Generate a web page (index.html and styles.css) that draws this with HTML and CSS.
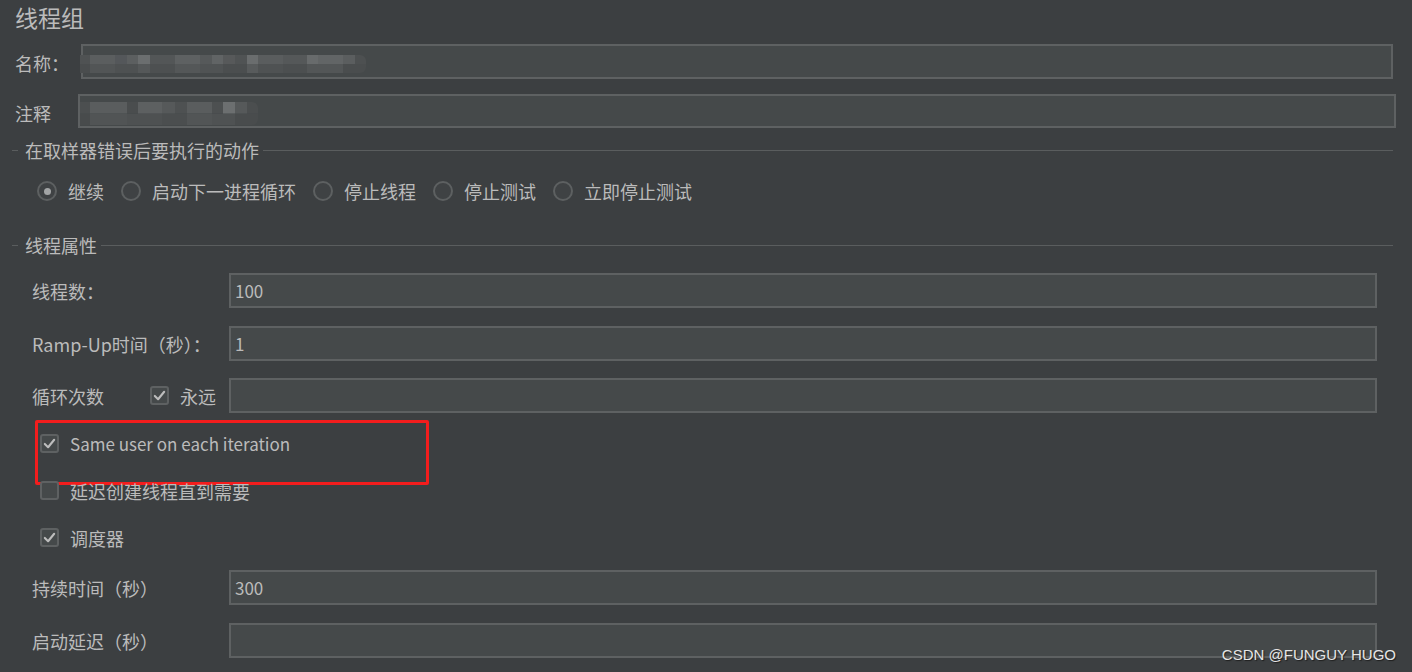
FILE: index.html
```html
<!DOCTYPE html>
<html lang="zh-CN">
<head>
    <meta charset="utf-8">
    <title>线程组</title>
    <link rel="stylesheet" href="styles.css">
</head>
<body>

<div class="panel">
    <h1 class="panel-title">线程组</h1>

    <!-- Name / comment -->
    <div class="name-row">
        <span class="name-label">名称：</span>
        <div class="text-field"><span class="mosaic mosaic-name"></span></div>
    </div>
    <div class="note-row">
        <span class="note-label">注释</span>
        <div class="text-field"><span class="mosaic mosaic-note"></span></div>
    </div>

    <!-- Action after sampler error -->
    <div class="group-title errors-title"><span>在取样器错误后要执行的动作</span></div>
    <div class="radio-row">
        <label class="radio"><span class="radio-dot checked"></span>继续</label>
        <label class="radio"><span class="radio-dot"></span>启动下一进程循环</label>
        <label class="radio"><span class="radio-dot"></span>停止线程</label>
        <label class="radio"><span class="radio-dot"></span>停止测试</label>
        <label class="radio"><span class="radio-dot"></span>立即停止测试</label>
    </div>

    <!-- Thread properties -->
    <div class="group-title props-title"><span>线程属性</span></div>

    <div class="form-row first-row">
        <span class="form-label">线程数：</span>
        <div class="text-field">100</div>
    </div>
    <div class="form-row">
        <span class="form-label">Ramp-Up时间（秒）：</span>
        <div class="text-field">1</div>
    </div>
    <div class="form-row loop-row">
        <span class="form-label">
            循环次数
            <span class="check forever-check"><svg viewBox="0 0 16 16"><polyline points="3,8.5 6.5,12 13,4"/></svg></span>
            <span class="forever-text">永远</span>
        </span>
        <div class="text-field"></div>
    </div>

    <div class="check-row marked">
        <span class="check"><svg viewBox="0 0 16 16"><polyline points="3,8.5 6.5,12 13,4"/></svg></span>
        <span class="check-text">Same user on each iteration</span>
    </div>
    <div class="check-row">
        <span class="check"></span>
        <span>延迟创建线程直到需要</span>
    </div>
    <div class="check-row">
        <span class="check"><svg viewBox="0 0 16 16"><polyline points="3,8.5 6.5,12 13,4"/></svg></span>
        <span>调度器</span>
    </div>

    <div class="form-row duration-row">
        <span class="form-label">持续时间（秒）</span>
        <div class="text-field">300</div>
    </div>
    <div class="form-row">
        <span class="form-label">启动延迟（秒）</span>
        <div class="text-field"></div>
    </div>

    <div class="watermark">CSDN @FUNGUY HUGO</div>
</div>

</body>
</html>
```

FILE: styles.css
```css
/* Darcula-like thread group panel */
* {
    box-sizing: border-box;
}

body {
    margin: 0;
    background: #3c3f41;
    color: #bbbbbb;
    font-family: "Noto Sans CJK SC", "Noto Sans", sans-serif;
    font-size: 18px;
}

.panel {
    position: relative;
    width: 1412px;
    height: 672px;
    overflow: hidden;
}

.panel-title {
    margin: 0;
    padding-left: 15px;
    height: 34px;
    line-height: 34px;
    font-size: 23px;
    font-weight: normal;
}

/* Text fields */
.text-field {
    flex: 1;
    display: flex;
    align-items: center;
    height: 35px;
    padding-left: 4px;
    background: #45494a;
    border: 2px solid #5e6162;
    font-size: 17px;
    color: #bbbbbb;
}

.name-row,
.note-row {
    display: flex;
    align-items: center;
    padding-left: 15px;
}

.name-row {
    margin-top: 10px;
    padding-right: 19px;
}

.name-label {
    width: 66px;
    padding-top: 3px;
}

.note-row {
    margin-top: 15px;
    padding-right: 16px;
}

.note-row .text-field {
    height: 34px;
}

.note-label {
    width: 63px;
    padding-top: 3px;
}

/* Pixelated (hidden) field contents */
.mosaic {
    align-self: flex-start;
    border-radius: 0 6px 6px 0;
}

.mosaic-name {
    width: 286px;
    height: 18px;
    margin: 9px 0 0 -7px;
    background:
        linear-gradient(to right,
            #4f5253 0 10px, #5b5e5f 10px 35px, #54575a 35px 47px, #5c5f60 47px 58px,
            #6b6e6f 58px 70px, #535657 70px 95px, #5e6162 95px 120px, #56595a 120px 132px,
            #616465 132px 143px, #57595a 143px 155px, #505354 155px 167px, #6a6d6e 167px 178px,
            #5a5d5e 178px 203px, #555859 203px 227px, #686b6c 227px 238px, #626566 238px 263px,
            #5b5e5f 263px 275px, #4d5051 275px 286px) top / 100% 50% no-repeat,
        linear-gradient(to right,
            #4a4d4e 0 10px, #525556 10px 35px, #4e5152 35px 58px, #555859 58px 70px,
            #4d5051 70px 95px, #545758 95px 120px, #505354 120px 143px, #4b4e4f 143px 167px,
            #585b5c 167px 178px, #4f5253 178px 203px, #4c4f50 203px 227px, #535657 227px 263px,
            #4a4d4e 263px 286px) bottom / 100% 50% no-repeat;
}

.mosaic-note {
    width: 178px;
    height: 23px;
    margin: 6px 0 0 -4px;
    background:
        linear-gradient(to right,
            #4c4f50 0 10px, #5a5d5e 10px 47px, #4a4d4e 47px 58px, #5d6061 58px 82px,
            #56595a 82px 95px, #4e5152 95px 107px, #5a5d5e 107px 132px, #4d5051 132px 143px,
            #6c6f70 143px 155px, #56595a 155px 167px, #4b4e4f 167px 178px) top / 100% 50% no-repeat,
        linear-gradient(to right,
            #484b4c 0 10px, #515455 10px 47px, #4e5152 47px 82px, #4b4e4f 82px 107px,
            #525556 107px 132px, #4f5253 132px 155px, #494c4d 155px 178px) bottom / 100% 50% no-repeat;
}

/* Titled group separators */
.group-title {
    display: flex;
    align-items: center;
    height: 22px;
    padding: 0 19px 0 12px;
}

.group-title::before {
    content: "";
    width: 6px;
    margin-right: 7px;
    border-top: 1px solid #5a5d5e;
}

.group-title::after {
    content: "";
    flex: 1;
    margin-left: 4px;
    border-top: 1px solid #5a5d5e;
}

.errors-title {
    margin-top: 11px;
}

.props-title {
    margin-top: 32px;
}

/* Radio buttons */
.radio-row {
    display: flex;
    align-items: center;
    gap: 17px;
    height: 22px;
    margin-top: 19px;
    padding-left: 37px;
}

.radio {
    display: flex;
    align-items: center;
    gap: 11px;
}

.radio-dot {
    display: flex;
    align-items: center;
    justify-content: center;
    width: 20px;
    height: 20px;
    border-radius: 50%;
    border: 2px solid #5d6061;
    background: #3f4244;
}

.radio-dot.checked::after {
    content: "";
    width: 7px;
    height: 7px;
    border-radius: 50%;
    background: #a3a5a6;
}

/* Label + field rows */
.form-row {
    display: flex;
    align-items: center;
    margin-top: 18px;
    padding: 0 35px 0 32px;
}

.form-row.first-row {
    margin-top: 17px;
}

.form-row.loop-row {
    margin-top: 17px;
}

.form-row.duration-row {
    margin-top: 9px;
}

.form-label {
    display: flex;
    align-items: center;
    flex-shrink: 0;
    width: 197px;
}

.forever-check {
    margin-left: 46px;
}

.forever-text {
    margin-left: 11px;
}

/* Checkboxes */
.check {
    display: flex;
    align-items: center;
    justify-content: center;
    width: 19px;
    height: 19px;
    border: 2px solid #5e6162;
    border-radius: 3px;
    background: #45494a;
}

.check svg {
    width: 15px;
    height: 15px;
    fill: none;
    stroke: #bdbdbd;
    stroke-width: 2.2;
    stroke-linecap: round;
    stroke-linejoin: round;
}

.check-row {
    position: relative;
    display: flex;
    align-items: center;
    gap: 11px;
    height: 47px;
    padding-left: 40px;
}

.check-row.marked {
    margin-top: 7px;
}

.check-text {
    font-size: 17px;
}

/* red highlight around the option */
.check-row.marked::after {
    content: "";
    position: absolute;
    left: 35px;
    top: 0;
    width: 388px;
    height: 59px;
    border: 3px solid #f31d1d;
    border-radius: 2px;
}

.watermark {
    position: absolute;
    right: 16px;
    bottom: 8px;
    line-height: 18px;
    font-family: "Liberation Sans", Arial, sans-serif;
    font-size: 15px;
    color: #e6e6e6;
    text-shadow: 1px 1px 1px #1e1e1e;
}
```
